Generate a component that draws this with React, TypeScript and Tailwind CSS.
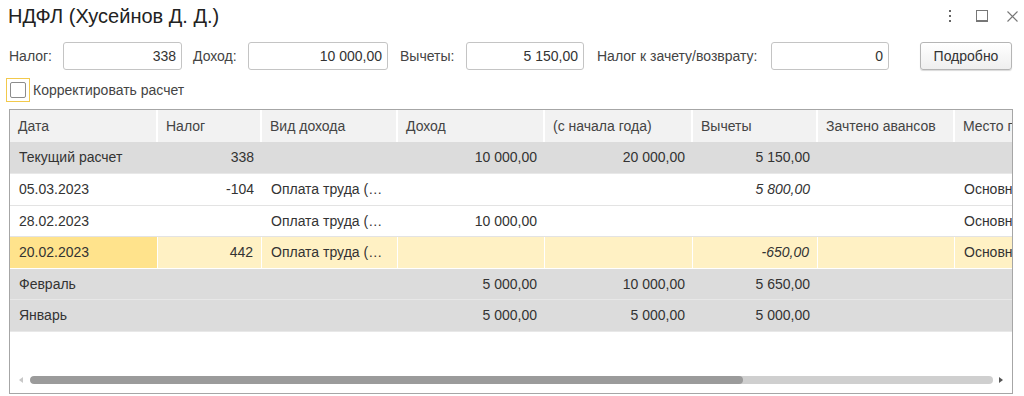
import React from "react";

const cols = [148, 104, 136, 147, 148, 125, 137, 120];

type Cell = { t?: string; right?: boolean; italic?: boolean };
type Row = { kind: "gray" | "white" | "yellow"; h: number; cells: Cell[] };

const headers = ["Дата", "Налог", "Вид дохода", "Доход", "(с начала года)", "Вычеты", "Зачтено авансов", "Место получения"];

const rows: Row[] = [
  {
    kind: "gray",
    h: 32,
    cells: [{ t: "Текущий расчет" }, { t: "338", right: true }, {}, { t: "10 000,00", right: true }, { t: "20 000,00", right: true }, { t: "5 150,00", right: true }, {}, {}],
  },
  {
    kind: "white",
    h: 32,
    cells: [{ t: "05.03.2023" }, { t: "-104", right: true }, { t: "Оплата труда (…" }, {}, {}, { t: "5 800,00", right: true, italic: true }, {}, { t: "Основное место" }],
  },
  {
    kind: "white",
    h: 31,
    cells: [{ t: "28.02.2023" }, {}, { t: "Оплата труда (…" }, { t: "10 000,00", right: true }, {}, {}, {}, { t: "Основное место" }],
  },
  {
    kind: "yellow",
    h: 32,
    cells: [{ t: "20.02.2023" }, { t: "442", right: true }, { t: "Оплата труда (…" }, {}, {}, { t: "-650,00", right: true, italic: true }, {}, { t: "Основное место" }],
  },
  {
    kind: "gray",
    h: 31,
    cells: [{ t: "Февраль" }, {}, {}, { t: "5 000,00", right: true }, { t: "10 000,00", right: true }, { t: "5 650,00", right: true }, {}, {}],
  },
  {
    kind: "gray",
    h: 32,
    cells: [{ t: "Январь" }, {}, {}, { t: "5 000,00", right: true }, { t: "5 000,00", right: true }, { t: "5 000,00", right: true }, {}, {}],
  },
];

function Field({ value, w }: { value: string; w: number }) {
  return (
    <div
      className="h-[28px] rounded-[3px] border border-[#c4c4c4] bg-white flex items-center justify-end pr-[5px] text-[#333]"
      style={{ width: w }}
    >
      {value}
    </div>
  );
}

export default function App() {
  const font = { fontFamily: '"Liberation Sans", Arial, sans-serif' };
  return (
    <div className="w-[1024px] h-[396px] bg-white overflow-hidden text-[14px] text-[#333]" style={font}>
      {/* Title bar */}
      <div className="h-[32px] flex items-center pl-[8px] pr-[6px]">
        <h1 className="text-[20px] text-[#222] leading-none">НДФЛ (Хусейнов Д. Д.)</h1>
        <div className="ml-auto flex items-center text-[#777]">
          <svg width="4" height="12" viewBox="0 0 4 12">
            <rect x="1" y="0" width="2" height="2" fill="#666" />
            <rect x="1" y="5" width="2" height="2" fill="#666" />
            <rect x="1" y="10" width="2" height="2" fill="#666" />
          </svg>
          <svg className="ml-[24px]" width="12" height="12" viewBox="0 0 12 12">
            <rect x="0.5" y="0.5" width="11" height="11" fill="none" stroke="#777" strokeWidth="1" />
            <rect x="0.5" y="10" width="11" height="1.5" fill="#777" />
          </svg>
          <svg className="ml-[19px]" width="11" height="11" viewBox="0 0 11 11">
            <path d="M0.5 0.5 L10.5 10.5 M10.5 0.5 L0.5 10.5" stroke="#777" strokeWidth="1.1" />
          </svg>
        </div>
      </div>

      {/* Totals row */}
      <div className="mt-[10px] h-[28px] flex items-center pl-[9px]">
        <span className="w-[54px] text-[#444]">Налог:</span>
        <Field value="338" w={119} />
        <span className="w-[66px] pl-[11px] text-[#444]">Доход:</span>
        <Field value="10 000,00" w={140} />
        <span className="w-[78px] pl-[12px] text-[#444]">Вычеты:</span>
        <Field value="5 150,00" w={118} />
        <span className="w-[187px] pl-[13px] text-[#444] whitespace-nowrap">Налог к зачету/возврату:</span>
        <Field value="0" w={118} />
        <button className="ml-[31px] h-[28px] w-[92px] rounded-[3px] border border-[#b5b5b5] bg-gradient-to-b from-white to-[#efefef] shadow-[0_1px_1px_rgba(0,0,0,0.15)] text-[#333]">
          Подробно
        </button>
      </div>

      {/* Checkbox */}
      <div className="mt-[8px] h-[24px] flex items-center pl-[6px]">
        <div className="w-[24px] h-[24px] border border-[#f2c94c] flex items-center justify-center">
          <div className="w-[16px] h-[16px] border border-[#8c8c8c] rounded-[2px] bg-white" />
        </div>
        <span className="ml-[3px] text-[#444]">Корректировать расчет</span>
      </div>

      {/* Table */}
      <div className="mt-[7px] ml-[9px] w-[1004px] h-[285px] border border-[#a6a6a6] flex flex-col overflow-hidden">
        <div className="flex h-[32px] bg-[#f2f2f2] shrink-0">
          {headers.map((h, i) => (
            <div
              key={i}
              className="shrink-0 flex items-center pl-[8px] border-r-2 border-white whitespace-nowrap overflow-hidden text-[#444]"
              style={{ width: cols[i] }}
            >
              {h}
            </div>
          ))}
        </div>
        {rows.map((r, ri) => (
          <div
            key={ri}
            className={
              r.kind === "gray"
                ? "flex shrink-0 bg-[#dcdcdc] border-b border-[#e8e8e8]"
                : r.kind === "yellow"
                ? "flex shrink-0 bg-[#fff1c4] border-b border-white"
                : "flex shrink-0 bg-white border-b border-[#e3e3e3]"
            }
            style={{ height: r.h }}
          >
            {r.cells.map((c, ci) => (
              <div
                key={ci}
                className={
                  "shrink-0 flex items-center whitespace-nowrap overflow-hidden text-[#333] " +
                  (c.right ? "justify-end pr-[8px] " : "pl-[9px] ") +
                  (c.italic ? "italic " : "") +
                  (r.kind === "yellow" ? "border-r border-white " : "") +
                  (r.kind === "yellow" && ci === 0 ? "bg-[#ffe38c]" : "")
                }
                style={{ width: cols[ci] }}
              >
                {c.t}
              </div>
            ))}
          </div>
        ))}
        <div className="flex-1" />
        {/* Horizontal scrollbar */}
        <div className="h-[18px] mb-[4px] shrink-0 flex items-center pl-[9px] pr-[8px] gap-[6px]">
          <svg width="5" height="6" viewBox="0 0 5 6">
            <path d="M4 0 L0 3 L4 6 Z" fill="#c8c8c8" />
          </svg>
          <div className="flex-1 h-[8px] rounded-full bg-[#cfcfcf] overflow-hidden">
            <div className="h-full w-[74%] rounded-full bg-[#9b9b9b]" />
          </div>
          <svg width="5" height="6" viewBox="0 0 5 6">
            <path d="M0 0 L4 3 L0 6 Z" fill="#555" />
          </svg>
        </div>
      </div>
    </div>
  );
}
